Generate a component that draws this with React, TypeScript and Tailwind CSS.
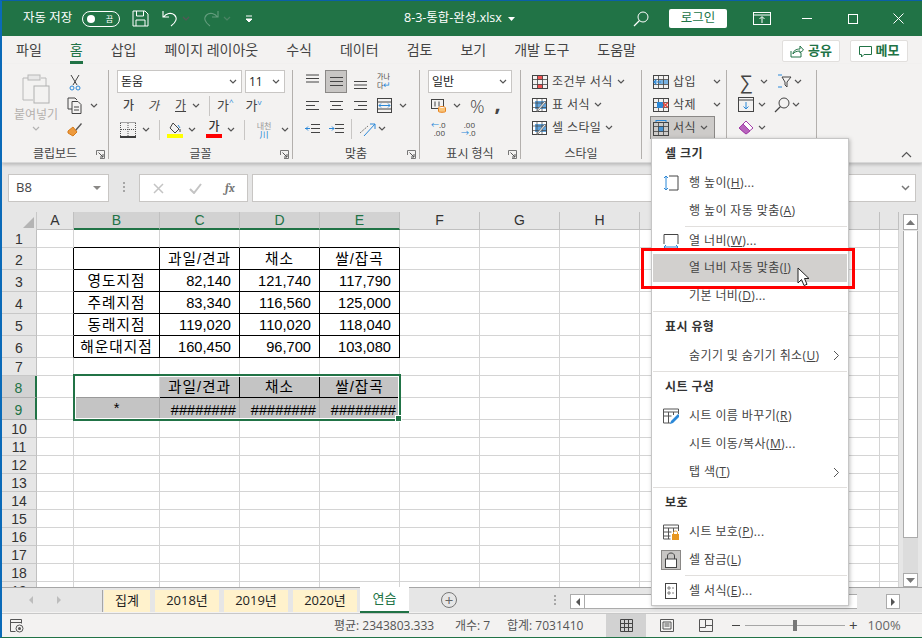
import type { ReactNode } from 'react';

const FONT = "font-['Open_Sans','Noto_Sans_CJK_KR',sans-serif]";
const CELLFONT = "font-['Liberation_Sans','Noto_Sans_CJK_KR',sans-serif]";

const BLUE = '#2b88d8';
const DK = '#444444';

function Chev({ c = 'ml-[4px]' }: { c?: string }) {
  return (
    <svg width="8" height="5" viewBox="0 0 8 5" className={`shrink-0 ${c}`}>
      <path d="M1 1l3 3 3-3" fill="none" stroke="#555" strokeWidth="1.2" />
    </svg>
  );
}

function Ico({ children, w = 16, h = 16, c = '' }: { children: ReactNode; w?: number; h?: number; c?: string }) {
  return (
    <svg width={w} height={h} viewBox={`0 0 ${w} ${h}`} fill="none" className={`shrink-0 ${c}`}>
      {children}
    </svg>
  );
}

function Lines({ d }: { d: string }) {
  return (
    <Ico w={15} h={16}>
      <path d={d} stroke={DK} />
    </Ico>
  );
}

function Launcher() {
  return (
    <Ico w={9} h={9}>
      <path d="M0.5 5V0.5H8.5V8.5H4" stroke="#777" />
      <path d="M2.5 2.5L7 7M7 4v3H4" stroke="#555" />
    </Ico>
  );
}

function Grid16() {
  return (
    <>
      <rect x="0.5" y="0.5" width="15" height="13" stroke={DK} />
      <path d="M5.5 0.5v13M10.5 0.5v13M0.5 4.5h15M0.5 9.5h15" stroke={DK} strokeWidth="0.8" />
    </>
  );
}

function CondIco() {
  return (
    <Ico w={16} h={14}>
      <rect x="5" y="1" width="6" height="4" fill="#f25555" />
      <rect x="5" y="9" width="6" height="4" fill="#f25555" />
      <Grid16 />
    </Ico>
  );
}

function InsertIco() {
  return (
    <Ico w={16} h={14}>
      <rect x="6" y="5" width="9" height="4" fill={BLUE} opacity="0.6" />
      <Grid16 />
      <path d="M8 7H1M3.500 4.500L1 7l2.500 2.500" stroke={BLUE} strokeWidth="1.200" />
    </Ico>
  );
}

function DeleteIco() {
  return (
    <Ico w={16} h={14}>
      <Grid16 />
      <rect x="4" y="4" width="6" height="6" fill={BLUE} />
      <path d="M10 4.500l5 5M15 4.500l-5 5" stroke="#e8453c" strokeWidth="1.400" />
    </Ico>
  );
}

function FormatIco() {
  return (
    <Ico w={16} h={16}>
      <path d="M3 0.500h10M3 0v2M13 0v2" stroke={BLUE} />
      <rect x="0.500" y="2.500" width="15" height="13" stroke={DK} />
      <rect x="5" y="6" width="6" height="6" fill={BLUE} opacity="0.8" />
      <path d="M5.500 2.500v13M10.500 2.500v13M0.500 6.500h15M0.500 11.500h15" stroke={DK} strokeWidth="0.8" />
    </Ico>
  );
}

function BrushTable() {
  return (
    <Ico w={16} h={16}>
      <rect x="0.5" y="1.5" width="14" height="13" stroke={DK} fill="#fff" />
      <rect x="3" y="4" width="11" height="8" fill={BLUE} opacity="0.75" />
      <path d="M5 1.5v13M10 1.5v13M0.5 6h14M0.5 10.5h14" stroke={DK} strokeWidth="0.7" />
      <path d="M14 5L7 13l-2 1.5 0.8-2.5L13 4z" fill="#fff" stroke="#666" strokeWidth="0.8" />
    </Ico>
  );
}

function Group({ w, label, launcher, children }: { w: number; label: string; launcher?: boolean; children: ReactNode }) {
  return (
    <div style={{ width: w }} className="shrink-0 h-[89px] flex flex-col border-r border-[#b3b0ad]">
      <div className="h-[78px] overflow-hidden">{children}</div>
      <div className="h-[11px] flex items-center relative text-[12px] text-[#444] justify-center">
        {label}
        {launcher && (
          <span className="absolute right-[3px] bottom-0 flex">
            <Launcher />
          </span>
        )}
      </div>
    </div>
  );
}

function Row({ c = '', children }: { c?: string; children: ReactNode }) {
  return <div className={`h-[23px] flex items-center ${c}`}>{children}</div>;
}

function VSep({ c = '' }: { c?: string }) {
  return <div className={`w-px h-[20px] bg-[#c8c6c4] shrink-0 ${c}`} />;
}

function Select({ w, text, c = '' }: { w: number; text: string; c?: string }) {
  return (
    <div style={{ width: w }} className={`h-[23px] bg-white border border-[#c8c6c4] flex items-center justify-between pl-[3px] pr-[4px] text-[12px] text-[#222] ${c}`}>
      <span>{text}</span>
      <Chev c="" />
    </div>
  );
}

function TitleBar() {
  return (
    <div className="h-[35px] bg-[#217346] flex items-center text-white shrink-0 relative">
      <span className="ml-[21px] text-[12.5px] w-[57px] whitespace-nowrap">자동 저장</span>
      <div className="w-[38px] h-[16px] ml-[2px] rounded-full border border-white flex items-center justify-between pl-[4px] pr-[6px]">
        <span className="w-[8px] h-[8px] rounded-full bg-white" />
        <span className="text-[8px]">끔</span>
      </div>
      <Ico w={17} h={17} c="ml-[12px]">
        <path d="M1 1h12l3 3v12H1z" stroke="#fff" />
        <path d="M4.5 1v5h7V1M4 16v-6h9v6" stroke="#fff" />
      </Ico>
      <Ico w={16} h={18} c="ml-[13px]">
        <path d="M1 1v6h6M1.5 7C4 3.5 9 2 12.5 5c3 3 2 7-3.5 11" stroke="#fff" strokeWidth="1.1" />
      </Ico>
      <Chev c="ml-[4px] invert brightness-200" />
      <Ico w={16} h={18} c="ml-[13px] opacity-60">
        <path d="M15 1v6H9M14.500 7C12 3.500 7 2 3.500 5c-3 3-2 7 3.500 11" stroke="#8fb8a2" strokeWidth="1.1" />
      </Ico>
      <Chev c="ml-[4px] opacity-30 invert" />
      <Ico w={8} h={8} c="ml-[14px]">
        <path d="M1 1h6M1 4l3 3 3-3z" stroke="#fff" fill="#fff" />
      </Ico>
      <span className="absolute left-[402px] text-[12.5px] whitespace-nowrap flex items-center">
        8-3-통합-완성.xlsx
        <svg width="7" height="4" className="ml-[6px]"><path d="M0 0h7L3.500 4z" fill="#fff" /></svg>
      </span>
      <Ico w={16} h={16} c="absolute left-[631px]">
        <circle cx="10" cy="6" r="5" stroke="#fff" />
        <path d="M6.500 9.500L1 15" stroke="#fff" strokeWidth="1.3" />
      </Ico>
      <div className="absolute left-[667px] top-[8px] w-[58px] h-[19px] bg-white rounded-[2px] text-[#217346] text-[12.500px] flex items-center justify-center">로그인</div>
      <Ico w={18} h={13} c="absolute left-[751px]">
        <rect x="0.500" y="0.500" width="17" height="12" stroke="#fff" />
        <path d="M0.500 3h17M9 11V5M6.500 7L9 4.500 11.500 7" stroke="#fff" />
      </Ico>
      <div className="absolute left-[800px] w-[10px] h-px bg-white" />
      <div className="absolute left-[846px] w-[10px] h-[10px] border border-white" />
      <Ico w={11} h={11} c="absolute left-[891px]">
        <path d="M0.500 0.500l10 10M10.500 0.500l-10 10" stroke="#fff" />
      </Ico>
    </div>
  );
}

function TabRow() {
  const tabs = ['파일', '홈', '삽입', '페이지 레이아웃', '수식', '데이터', '검토', '보기', '개발 도구', '도움말'];
  return (
    <div className="h-[28px] bg-[#f3f2f1] flex items-start shrink-0 pl-[14px] gap-[28px] text-[14px] text-[#444] relative">
      {tabs.map((t) => (
        <span key={t} className={`h-[28px] pt-[3px] leading-[22px] whitespace-nowrap relative ${t === '홈' ? 'text-[#217346]' : ''}`}>
          {t}
          {t === '홈' && <span className="absolute left-0 right-0 top-[25px] h-[3px] bg-[#217346]" />}
        </span>
      ))}
      <div className="absolute left-[780px] top-[4px] w-[58px] h-[22px] bg-white border border-[#e1dfdd] rounded-[2px] flex items-center justify-center gap-[4px] text-[#217346] text-[13px] font-bold">
        <Ico w={14} h={13}>
          <path d="M1 6v6h10V8M3 9c0-3 3-5 7-5V1l3.500 4L10 8V6C7 6 4 7 3 9z" stroke="#217346" />
        </Ico>
        공유
      </div>
      <div className="absolute left-[848px] top-[4px] w-[58px] h-[22px] bg-white border border-[#e1dfdd] rounded-[2px] flex items-center justify-center gap-[4px] text-[#217346] text-[13px] font-bold">
        <Ico w={13} h={13}>
          <path d="M0.500 1.500h12v8H5L2.500 12V9.500h-2z" stroke="#217346" />
        </Ico>
        메모
      </div>
    </div>
  );
}

function Ribbon() {
  return (
    <div className="h-[99px] bg-[#f3f2f1] shrink-0 flex pt-[6px] items-start relative border-b border-[#d8d8d8] shadow-[0_2px_3px_rgba(0,0,0,0.18)] z-10">
      <Group w={107} label="클립보드" launcher>
        <div className="flex">
          <div className="w-[60px] flex flex-col items-center pl-[8px] pt-[4px]">
            <Ico w={28} h={30}>
              <path d="M1 4h7M19 4h5v8M1 4v22h10" stroke="#b8b8b8" />
              <rect x="6" y="1" width="12" height="5" fill="#e8e8e8" stroke="#b8b8b8" />
              <rect x="12" y="12" width="15" height="17" fill="#f3f2f1" stroke="#b0b0b0" />
            </Ico>
            <span className="text-[12px] text-[#b3b0ad] whitespace-nowrap mt-[3px] leading-[16px]">붙여넣기</span>
            <Chev c="mt-[3px] opacity-40" />
          </div>
          <div className="ml-[5px] flex flex-col pt-[1px]">
            <Row>
              <Ico w={12} h={16} c="ml-[2px]">
                <path d="M2 0l6 10M10 0L4 10" stroke="#444" />
                <circle cx="3" cy="13" r="2" stroke={BLUE} />
                <circle cx="9" cy="13" r="2" stroke={BLUE} />
              </Ico>
            </Row>
            <Row>
              <Ico w={16} h={17}>
                <path d="M5 12H1V1h7l2 2" stroke="#444" />
                <path d="M5 4.500h6l3 3v9H5zM7 10h5M7 13h5" stroke="#444" />
              </Ico>
              <Chev c="ml-[7px]" />
            </Row>
            <Row>
              <Ico w={16} h={16}>
                <path d="M8 9l6-7 1 1-6 7z" fill="#555" />
                <path d="M1 10l5-4 4 5-4 4-5-3z" fill="#ed9a3d" stroke="#d67b1a" />
              </Ico>
            </Row>
          </div>
        </div>
      </Group>

      <Group w={184} label="글꼴" launcher>
        <div className="pl-[8px]">
          <div className="flex gap-[3px] h-[23px]">
            <Select w={125} text="돋움" />
            <Select w={40} text="11" />
          </div>
          <Row c="mt-[1px] text-[12px] text-[#444] pl-[6px]">
            <span className="font-medium w-[25px]">가</span>
            <span className="italic w-[27px]">가</span>
            <span className="underline">가</span>
            <Chev c="ml-[6px]" />
            <VSep c="ml-[9px]" />
            <span className="ml-[7px] text-[13px]">가</span>
            <span className="text-[8px] text-[#2b88d8] -mt-[8px]">^</span>
            <span className="ml-[12px] text-[13px]">가</span>
            <span className="text-[8px] text-[#2b88d8] -mt-[8px]">v</span>
          </Row>
          <Row c="mt-[1px]">
            <Ico w={16} h={16} c="ml-[3px]">
              <path d="M0.500 1v13M15.500 1v13M0.500 0.500h15M8 1v13M1 7.500h14" stroke="#555" strokeDasharray="1 1" />
              <path d="M0 15h16" stroke="#000" strokeWidth="1.500" />
            </Ico>
            <Chev c="ml-[6px]" />
            <VSep c="ml-[9px]" />
            <div className="ml-[7px] w-[16px] flex flex-col items-center">
              <Ico w={14} h={12}>
                <path d="M5 1l6 6-4 4-5-5zM12 7v3" stroke="#444" />
                <path d="M10 3l2 3" stroke={BLUE} />
              </Ico>
              <div className="w-[16px] h-[4px] bg-[#ffff00]" />
            </div>
            <Chev c="ml-[5px]" />
            <div className="ml-[10px] w-[16px] flex flex-col items-center leading-[12px] text-[12px] font-medium text-[#333]">
              가
              <div className="w-[16px] h-[4px] bg-[#ff0000] mt-[1px]" />
            </div>
            <Chev c="ml-[5px]" />
            <VSep c="ml-[9px]" />
            <div className="ml-[7px] w-[24px] flex flex-col items-center leading-[9px] text-[8px] text-[#999]">
              내천
              <span className="text-[#2b88d8] text-[9px]">川</span>
            </div>
            <Chev c="ml-[5px]" />
          </Row>
        </div>
      </Group>

      <Group w={127} label="맞춤" launcher>
        <div className="pl-[12px]">
          <Row>
            <Lines d="M1 1h13M1 4.500h13M1 8h13" />
            <div className="ml-[5px] w-[22px] h-[23px] bg-[#c8c6c4] border border-[#8a8886] flex items-center justify-center">
              <Lines d="M1 3.500h13M1 7.500h13M1 11.500h13" />
            </div>
            <div className="ml-[6px]"><Lines d="M1 7.500h13M1 11h13M1 14.500h13" /></div>
            <div className="ml-[9px] w-[17px] leading-[8px] text-[7px] text-[#444]">가나<br />다<span className="text-[#2b88d8] text-[9px]">↵</span></div>
          </Row>
          <Row c="mt-[1px]">
            <Lines d="M1 3.500h13M1 7.500h9M1 11.500h13" />
            <div className="ml-[9px]"><Lines d="M1 3.500h13M3 7.500h9M1 11.500h13" /></div>
            <div className="ml-[9px]"><Lines d="M1 3.500h13M5 7.500h9M1 11.500h13" /></div>
            <Ico w={15} h={15} c="ml-[9px]">
              <rect x="0.500" y="0.500" width="14" height="14" stroke="#444" />
              <path d="M0.500 4h14M0.500 11h14" stroke="#444" />
              <path d="M2 7.500h11M4 5.500l-2 2 2 2M11 5.500l2 2-2 2" stroke={BLUE} />
            </Ico>
            <Chev c="ml-[7px]" />
          </Row>
          <Row>
            <Ico w={15} h={14}>
              <path d="M6 2.500h9M6 6.500h9M6 10.500h9" stroke="#444" />
              <path d="M0 6.500h5M3 4.500l-2 2 2 2" stroke={BLUE} />
            </Ico>
            <Ico w={15} h={14} c="ml-[9px]">
              <path d="M6 2.500h9M6 6.500h9M6 10.500h9" stroke="#444" />
              <path d="M0 6.500h5M3 4.500l2 2-2 2" stroke={BLUE} />
            </Ico>
            <VSep c="ml-[7px]" />
            <Ico w={17} h={16} c="ml-[7px]">
              <path d="M1 12L9 5" stroke="#777" strokeDasharray="2 1" />
              <path d="M5 15L16 3M11 3h5v5" stroke={BLUE} />
            </Ico>
            <Chev c="ml-[2px]" />
          </Row>
        </div>
      </Group>

      <Group w={101} label="표시 형식" launcher>
        <div className="pl-[8px]">
          <Select w={84} text="일반" />
          <Row c="mt-[1px]">
            <Ico w={15} h={15} c="ml-[3px]">
              <rect x="0.500" y="1.500" width="12" height="9" stroke="#444" />
              <path d="M4 3.500v5M8 3.500v5" stroke="#444" />
              <ellipse cx="11" cy="10" rx="3.500" ry="1.500" fill="#fff" stroke="#e8811a" />
              <path d="M7.500 10v3.500c0 1 7 1 7 0V10" stroke="#e8811a" fill="#f8c47a" />
            </Ico>
            <Chev c="ml-[7px]" />
            <span className="ml-[9px] text-[18px] leading-[20px] text-[#444] font-light">%</span>
            <span className="ml-[10px] text-[22px] leading-[20px] font-bold text-[#444] -mt-[8px]">,</span>
          </Row>
          <Row>
            <div className="ml-[3px] w-[14px] leading-[8px] text-[8px] text-[#444] text-right">
              <span className="text-[#2b88d8]">←</span>.0<br />.00
            </div>
            <div className="ml-[16px] w-[14px] leading-[8px] text-[8px] text-[#444] text-right">
              .00<br /><span className="text-[#2b88d8]">→</span>.0
            </div>
          </Row>
        </div>
      </Group>

      <Group w={121} label="스타일">
        <div className="pl-[11px] text-[12px] text-[#444]">
          <Row>
            <CondIco />
            <span className="ml-[4px] whitespace-nowrap tracking-[0.4px]">조건부 서식</span>
            <Chev />
          </Row>
          <Row>
            <BrushTable />
            <span className="ml-[4px] whitespace-nowrap tracking-[0.4px]">표 서식</span>
            <Chev />
          </Row>
          <Row>
            <BrushTable />
            <span className="ml-[4px] whitespace-nowrap tracking-[0.4px]">셀 스타일</span>
            <Chev />
          </Row>
        </div>
      </Group>

      <Group w={85} label="">
        <div className="pl-[8px] text-[12px] text-[#444]">
          <Row c="pl-[3px]">
            <InsertIco />
            <span className="ml-[4px] w-[36px] tracking-[0.4px]">삽입</span>
            <Chev />
          </Row>
          <Row c="pl-[3px]">
            <DeleteIco />
            <span className="ml-[4px] w-[36px] tracking-[0.4px]">삭제</span>
            <Chev />
          </Row>
          <div className="h-[23px] w-[65px] flex items-center pl-[2px] bg-[#cdcbc9] border border-[#8a8886]">
            <FormatIco />
            <span className="ml-[4px] tracking-[0.4px]">서식</span>
            <Chev />
          </div>
        </div>
      </Group>

      <Group w={90} label="">
        <div className="pl-[11px]">
          <Row>
            <span className="w-[13px] ml-[2px] text-[19px] leading-[20px] text-[#444]">∑</span>
            <Chev c="ml-[7px]" />
            <Ico w={15} h={15} c="ml-[9px]">
              <path d="M5 1H1M5 13H1" stroke={BLUE} />
              <path d="M5 3h9L10 8v5L8 11V8z" stroke="#444" />
            </Ico>
            <Chev c="ml-[2px]" />
          </Row>
          <Row>
            <Ico w={16} h={15}>
              <rect x="0.500" y="0.500" width="15" height="14" stroke="#444" />
              <path d="M0.500 3h15" stroke="#444" />
              <path d="M8 5v7M5.500 9.500L8 12l2.500-2.500" stroke={BLUE} />
            </Ico>
            <Chev c="ml-[4px]" />
            <Ico w={16} h={16} c="ml-[8px]">
              <circle cx="10" cy="6" r="5" stroke="#444" />
              <path d="M6.500 9.500L1 15" stroke="#444" strokeWidth="1.300" />
            </Ico>
            <Chev c="ml-[2px]" />
          </Row>
          <Row>
            <Ico w={16} h={15}>
              <path d="M1 8l7-7 7 7-7 6z" stroke="#a33fa8" fill="#fff" />
              <path d="M1 8l4-4 7 7-4 3z" fill="#b865bd" stroke="#a33fa8" />
            </Ico>
            <Chev c="ml-[4px]" />
          </Row>
        </div>
      </Group>

      <div className="flex-1 h-[89px] flex items-end justify-end pr-[10px]">
        <Ico w={11} h={7} c="mb-[1px]">
          <path d="M1 6l4.500-4.500L10 6" stroke="#555" strokeWidth="1.200" />
        </Ico>
      </div>
    </div>
  );
}

function FormulaBar() {
  return (
    <div className="h-[49px] bg-[#e6e6e6] shrink-0 flex items-start pt-[11px] pl-[6px]">
      <div className="w-[101px] h-[28px] bg-white border border-[#c8c6c4] flex items-center justify-between pl-[7px] pr-[7px] text-[13px] text-[#444]">
        B8
        <svg width="8" height="4"><path d="M0 0h8L4 4z" fill="#8a8886" /></svg>
      </div>
      <div className="w-[30px] flex flex-col items-center gap-[2px] pt-[8px]">
        <span className="w-[2px] h-[2px] bg-[#a6a6a6]" />
        <span className="w-[2px] h-[2px] bg-[#a6a6a6]" />
        <span className="w-[2px] h-[2px] bg-[#a6a6a6]" />
      </div>
      <div className="w-[109px] h-[28px] bg-white border border-[#c8c6c4] flex items-center pl-[13px]">
        <Ico w={11} h={11}>
          <path d="M1 1l9 9M10 1l-9 9" stroke="#c4c4c4" strokeWidth="1.500" />
        </Ico>
        <Ico w={13} h={11} c="ml-[25px]">
          <path d="M1 6l4 4 7-9" stroke="#c4c4c4" strokeWidth="2" />
        </Ico>
        <span className="ml-[23px] text-[12px] italic font-serif text-[#777] font-bold">fx</span>
      </div>
      <div className="ml-[4px] w-[664px] h-[28px] bg-white border border-[#c8c6c4] flex items-center justify-end pr-[5px]">
        <Ico w={9} h={6}>
          <path d="M1 1l3.500 3.500L8 1" stroke="#777" strokeWidth="1.500" />
        </Ico>
      </div>
    </div>
  );
}

const HEADS = ['A', 'B', 'C', 'D', 'E', 'F', 'G', 'H', 'I', 'J', 'K', ''];
const WIDTHS = [37, 86, 80, 80, 80, 80, 80, 80, 80, 80, 80, 19];

const DATA: Record<number, string[]> = {
  2: ['', '과일/견과', '채소', '쌀/잡곡'],
  3: ['영도지점', '82,140', '121,740', '117,790'],
  4: ['주례지점', '83,340', '116,560', '125,000'],
  5: ['동래지점', '119,020', '110,020', '118,040'],
  6: ['해운대지점', '160,450', '96,700', '103,080'],
  8: ['', '과일/견과', '채소', '쌀/잡곡'],
  9: ['*', '########', '########', '########'],
};

function rowHeight(r: number) {
  if (r === 1) return 18;
  if (r <= 6) return 22;
  if (r === 7) return 18;
  if (r <= 9) return 22;
  return 18;
}

function headPad(r: number) {
  if ((r >= 2 && r <= 6) || r === 8 || r === 9) return 'pt-[3px]';
  if (r === 7 || r >= 14) return 'pt-[2px]';
  return 'pt-[1px]';
}

function Cell({ r, col }: { r: number; col: number }) {
  const inTable = r >= 2 && r <= 6 && col >= 1 && col <= 4;
  const sel = (r === 8 && col >= 2 && col <= 4) || (r === 9 && col >= 1 && col <= 4);
  const text = col >= 1 && col <= 4 ? DATA[r]?.[col - 1] ?? '' : '';
  const numeric = /^[\d,]+$/.test(text);
  const hash = text.startsWith('#');

  let borderR = 'border-r-[#d4d4d4]';
  let borderB = 'border-b-[#d4d4d4]';
  if (inTable || (col === 0 && r >= 2 && r <= 6)) borderR = 'border-r-black';
  if (inTable || (r === 1 && col >= 1 && col <= 4)) borderB = 'border-b-black';
  if (r === 8 && col >= 2 && col <= 4) {
    borderR = 'border-r-black';
    borderB = 'border-b-black';
  }
  if (r === 8 && col === 1) borderB = 'border-b-[#999]';
  if (r === 9 && col >= 1 && col <= 4) borderR = 'border-r-[#aaa]';

  return (
    <div
      style={{ width: WIDTHS[col] }}
      className={`shrink-0 h-full border-r border-b ${borderR} ${borderB} flex items-center whitespace-nowrap overflow-hidden text-[14.67px] text-black ${CELLFONT} ${sel ? 'bg-[#c4c4c4]' : 'bg-white'} ${
        numeric ? 'justify-end pr-[8px]' : hash ? 'justify-end pr-[3px] pt-[2px]' : text === '*' ? 'justify-center pb-[2px]' : 'justify-center tracking-[1px]'
      }`}
    >
      {text}
    </div>
  );
}

function Sheet() {
  const rows = Array.from({ length: 19 }, (_, i) => i + 1);
  return (
    <div className="flex-1 min-h-0 flex bg-[#e6e6e6] overflow-hidden">
      <div className="w-[897px] shrink-0 flex flex-col relative overflow-hidden">
        <div className="h-[18px] flex shrink-0">
          <div className="w-[35px] shrink-0 bg-[#e6e6e6] border-r border-[#c8c8c8] flex items-end justify-end p-[2px]">
            <svg width="11" height="11"><path d="M11 0v11H0z" fill="#b4b4b4" /></svg>
          </div>
          {HEADS.map((h, i) => {
            const on = i >= 1 && i <= 4;
            return (
              <div
                key={i}
                style={{ width: WIDTHS[i] }}
                className={`shrink-0 border-r border-[#c0c0c0] flex items-center justify-center text-[14px] ${
                  on ? 'bg-[#d2d2d2] text-[#217346] border-b-2 border-b-[#217346]' : 'bg-[#e6e6e6] text-[#333] border-b border-b-[#c0c0c0]'
                } ${CELLFONT}`}
              >
                {h}
              </div>
            );
          })}
        </div>
        {rows.map((r) => {
          const on = r === 8 || r === 9;
          return (
            <div key={r} style={{ height: rowHeight(r) }} className="flex shrink-0">
              <div
                className={`w-[35px] shrink-0 flex items-center justify-center text-[14px] border-b ${headPad(r)} ${CELLFONT} ${
                  on ? 'bg-[#d2d2d2] text-[#217346] border-r-2 border-r-[#217346] border-b-[#b0b0b0]' : 'bg-[#e6e6e6] text-[#333] border-r border-r-[#c0c0c0] border-b-[#c8c8c8]'
                }`}
              >
                {r}
              </div>
              {WIDTHS.map((_, c) => (
                <Cell key={c} r={r} col={c} />
              ))}
            </div>
          );
        })}
        {/* 선택 영역 */}
        <div className="absolute left-[71px] top-[162px] w-[328px] h-[47px] border-2 border-[#217346] shadow-[inset_0_0_0_1px_#fff] pointer-events-none">
          <span className="absolute -right-[3px] -bottom-[3px] w-[5px] h-[5px] bg-[#217346] border border-white box-content" />
        </div>
      </div>
      <div className="flex-1 pl-[4px] pt-[2px] pr-[4px] flex flex-col">
        <div className="h-[16px] bg-white border border-[#ababab] flex items-center justify-center">
          <svg width="9" height="5"><path d="M4.500 0L9 5H0z" fill="#777" /></svg>
        </div>
        <div className="h-[307px] mt-px bg-white border-x border-b border-[#ababab]" />
        <div className="flex-1 bg-[#dcdcdc]" />
        <div className="h-[14px] bg-white border border-[#ababab] flex items-center justify-center">
          <svg width="9" height="5"><path d="M0 0h9L4.500 5z" fill="#777" /></svg>
        </div>
      </div>
    </div>
  );
}

function SheetTab({ t, w, ml }: { t: string; w: number; ml: string }) {
  return (
    <div style={{ width: w }} className={`h-[22px] mt-[2px] ${ml} bg-[#fff2cc] flex items-center justify-center text-[13px] text-[#222] whitespace-nowrap shrink-0`}>
      {t}
    </div>
  );
}

function TabBar() {
  return (
    <div className="h-[25px] bg-[#e6e6e6] border-t border-[#a6a6a6] shrink-0 flex items-start relative">
      <div className="w-[100px] h-full flex items-center pl-[27px] gap-[24px] shrink-0">
        <svg width="4" height="8"><path d="M4 0v8L0 4z" fill="#bdbdbd" /></svg>
        <svg width="4" height="8"><path d="M0 0v8l4-4z" fill="#bdbdbd" /></svg>
      </div>
      <div className="w-px h-[22px] mt-[2px] bg-[#a6a6a6] shrink-0" />
      <SheetTab t="집계" w={46} ml="ml-px" />
      <SheetTab t="2018년" w={64} ml="ml-[5px]" />
      <SheetTab t="2019년" w={64} ml="ml-[5px]" />
      <SheetTab t="2020년" w={64} ml="ml-[5px]" />
      <div className="w-[49px] h-[26px] -mt-px ml-[3px] bg-white border-b-2 border-[#217346] flex items-center justify-center text-[13px] text-[#217346] shrink-0">연습</div>
      <div className="ml-[32px] mt-[4px] w-[16px] h-[16px] rounded-full border border-[#777] flex items-center justify-center text-[#666] text-[15px] leading-none shrink-0">+</div>
      <div className="ml-[97px] mt-[7px] flex flex-col gap-[2px]">
        <span className="w-[2px] h-[2px] bg-[#a6a6a6]" />
        <span className="w-[2px] h-[2px] bg-[#a6a6a6]" />
        <span className="w-[2px] h-[2px] bg-[#a6a6a6]" />
      </div>
      <div className="ml-[14px] mt-[6px] w-[15px] h-[15px] bg-white border border-[#ababab] flex items-center justify-center">
        <svg width="4" height="8"><path d="M4 0v8L0 4z" fill="#555" /></svg>
      </div>
      <div className="w-[272px] h-[15px] mt-[6px] bg-white border-y border-[#ababab]" />
      <div className="ml-[29px] mt-[6px] w-[14px] h-[15px] bg-white border border-[#ababab] flex items-center justify-center">
        <svg width="4" height="8"><path d="M0 0v8l4-4z" fill="#555" /></svg>
      </div>
    </div>
  );
}

function StatusBar() {
  return (
    <div className="h-[24px] bg-[#f3f2f1] border-t border-[#c8c8c8] mt-[1px] shrink-0 flex items-center text-[12px] text-[#555]">
      <Ico w={14} h={14} c="ml-[8px]">
        <path d="M0.500 0.500h11v4M0.500 0.500v12h5M0.500 3.500h11" stroke="#555" />
        <circle cx="9.500" cy="9.500" r="3.500" stroke="#555" />
        <circle cx="9.500" cy="9.500" r="1.500" fill="#555" />
      </Ico>
      <span className="ml-[310px] whitespace-nowrap w-[121px]">평균: 2343803.333</span>
      <span className="whitespace-nowrap w-[52px]">개수: 7</span>
      <span className="whitespace-nowrap w-[99px]">합계: 7031410</span>
      <div className="w-[40px] h-full bg-[#d2d2d2] flex items-center justify-center">
        <Ico w={13} h={13}>
          <path d="M0.500 0.500h12v12h-12zM4.500 0.500v12M8.500 0.500v12M0.500 4.500h12M0.500 8.500h12" stroke="#444" />
        </Ico>
      </div>
      <Ico w={14} h={13} c="ml-[14px]">
        <path d="M0.500 0.500h13v12h-13zM3 3h8v7H3zM4.500 5h5M4.500 7h5" stroke="#555" />
      </Ico>
      <Ico w={14} h={13} c="ml-[25px]">
        <path d="M0.500 0.500h13v12h-13zM0.500 8.500h6V0.500M6.500 6.500h7" stroke="#555" />
      </Ico>
      <div className="ml-[19px] w-[8px] h-px bg-[#444]" />
      <div className="ml-[5px] w-[100px] h-px bg-[#a6a6a6] relative">
        <span className="absolute left-[48px] -top-[5px] w-[4px] h-[11px] bg-[#777]" />
      </div>
      <span className="ml-[4px] text-[15px] leading-none text-[#444]">+</span>
      <span className="ml-[10px] text-[13px] text-[#666]">100%</span>
    </div>
  );
}

function U({ children }: { children: ReactNode }) {
  return <span className="underline underline-offset-1">{children}</span>;
}

function MenuHead({ t, h }: { t: string; h: number }) {
  return (
    <div style={{ height: h }} className="flex items-center pl-[13px] text-[12px] font-bold text-[#333] tracking-[0.4px]">
      {t}
    </div>
  );
}

function MenuItem({ icon, h = 28, arrow, hot, children }: { icon?: ReactNode; h?: number; arrow?: boolean; hot?: boolean; children: ReactNode }) {
  return (
    <div style={{ height: h }} className={`flex items-center text-[12px] text-[#444] tracking-[0.4px] whitespace-nowrap ${hot ? 'bg-[#d2d0ce] mx-px' : ''}`}>
      <div className={`${hot ? 'w-[36px]' : 'w-[37px]'} flex justify-center shrink-0`}>{icon}</div>
      {children}
      {arrow && (
        <Ico w={7} h={11} c="ml-auto mr-[8px]">
          <path d="M1 1l4.500 4.500L1 10" stroke="#555" />
        </Ico>
      )}
    </div>
  );
}

function Sep({ inset }: { inset?: boolean }) {
  return <div className={`h-px my-px bg-[#e1dfdd] mr-px ${inset ? 'ml-[33px]' : 'ml-px'}`} />;
}

function Menu() {
  return (
    <div className={`absolute left-[649px] top-[137px] w-[198px] h-[468px] bg-white border border-[#c6c6c6] shadow-[1px_1px_4px_rgba(0,0,0,0.25)] z-20 ${FONT}`}>
      <MenuHead t="셀 크기" h={29} />
      <MenuItem
        h={29}
        icon={
          <Ico w={16} h={16}>
            <path d="M6 1h9v14H6" stroke="#444" />
            <path d="M3 1v14M1 3l2-2 2 2M1 13l2 2 2-2" stroke={BLUE} />
          </Ico>
        }
      >
        행 높이(<U>H</U>)...
      </MenuItem>
      <MenuItem h={28}>행 높이 자동 맞춤(<U>A</U>)</MenuItem>
      <Sep inset />
      <MenuItem
        h={26}
        icon={
          <Ico w={16} h={15}>
            <path d="M1 10V0.500h14V10" stroke="#444" />
            <path d="M1 13h14M3 11l-2 2 2 2M13 11l2 2-2 2" stroke={BLUE} />
          </Ico>
        }
      >
        열 너비(<U>W</U>)...
      </MenuItem>
      <MenuItem h={28} hot>열 너비 자동 맞춤(<U>I</U>)</MenuItem>
      <MenuItem h={28}>기본 너비(<U>D</U>)...</MenuItem>
      <Sep />
      <MenuHead t="표시 유형" h={28} />
      <MenuItem h={29} arrow>숨기기 및 숨기기 취소(<U>U</U>)</MenuItem>
      <Sep />
      <MenuHead t="시트 구성" h={28} />
      <MenuItem
        h={29}
        icon={
          <Ico w={16} h={16}>
            <path d="M0.500 1h15v5M0.500 1v14h7M0.500 4h15M0.500 8h8M5.500 4v11M10.500 4v3" stroke="#555" />
            <path d="M15 6L8 13l-1 3 3-1 7-7z" fill={BLUE} />
          </Ico>
        }
      >
        시트 이름 바꾸기(<U>R</U>)
      </MenuItem>
      <MenuItem h={28}>시트 이동/복사(<U>M</U>)...</MenuItem>
      <MenuItem h={28} arrow>탭 색(<U>T</U>)</MenuItem>
      <Sep />
      <MenuHead t="보호" h={28} />
      <MenuItem
        h={29}
        icon={
          <Ico w={16} h={16}>
            <path d="M0.500 1h15v6M0.500 1v14h7M0.500 4h15M0.500 8h8M0.500 12h7M5.500 4v11M10.500 4v4" stroke="#555" />
            <rect x="9" y="10" width="7" height="6" fill="#e8971f" />
            <path d="M10.500 10V8.500c0-2 4-2 4 0V10" stroke="#e8971f" />
          </Ico>
        }
      >
        시트 보호(<U>P</U>)...
      </MenuItem>
      <MenuItem
        h={28}
        icon={
          <div className="w-[20px] h-[20px] bg-[#c8c6c4] border border-[#8a8886] flex items-center justify-center">
            <Ico w={12} h={16}>
              <rect x="0.500" y="7" width="11" height="8.500" fill="#fff" stroke="#444" />
              <path d="M2.500 7V4c0-4 7-4 7 0v3" stroke="#444" />
            </Ico>
          </div>
        }
      >
        셀 잠금(<U>L</U>)
      </MenuItem>
      <Sep inset />
      <MenuItem
        h={28}
        icon={
          <Ico w={12} h={16}>
            <rect x="0.500" y="0.500" width="11" height="15" stroke="#444" />
            <path d="M3 4h2v2H3zM3 9h2v2H3zM7 5h2M7 10h2" stroke="#666" strokeWidth="0.800" />
          </Ico>
        }
      >
        셀 서식(<U>E</U>)...
      </MenuItem>
    </div>
  );
}

export default function App() {
  return (
    <div className={`relative w-[922px] h-[638px] overflow-hidden flex flex-col border-t border-t-[#0a5fa8] border-l-2 border-l-[#0a6ab8] border-b border-b-[#217346] bg-[#f3f2f1] ${FONT}`}>
      <TitleBar />
      <TabRow />
      <Ribbon />
      <FormulaBar />
      <Sheet />
      <TabBar />
      <StatusBar />
      <Menu />
      {/* 빨간 강조 상자 */}
      <div className="absolute left-[639px] top-[247px] w-[214px] h-[41px] border-[3px] border-[#ff0000] z-30 pointer-events-none" />
      <svg width="13" height="21" viewBox="0 0 13 21" className="absolute left-[795px] top-[266px] z-40">
        <path d="M1 1v15l3.500-3.500 2.500 6 3-1.200-2.500-5.800H12z" fill="#fff" stroke="#222" />
      </svg>
    </div>
  );
}
